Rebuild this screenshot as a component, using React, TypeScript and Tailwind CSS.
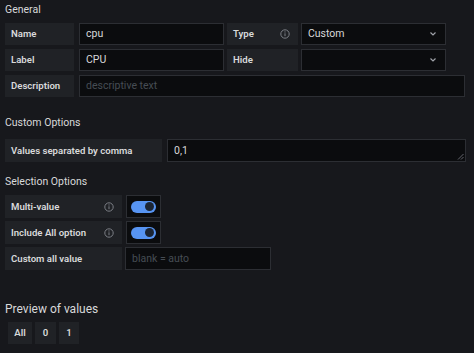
import React from "react";

const Info = () => (
  <svg width="10" height="10" viewBox="0 0 10 10" className="shrink-0">
    <circle cx="5" cy="5" r="4.2" fill="none" stroke="#7b7e85" strokeWidth="1" />
    <line x1="5" y1="4.3" x2="5" y2="7.2" stroke="#7b7e85" strokeWidth="1" />
    <circle cx="5" cy="2.9" r="0.6" fill="#7b7e85" />
  </svg>
);

const Chevron = () => (
  <svg width="8" height="6" viewBox="0 0 8 6" className="shrink-0">
    <path d="M1.5 1.5 L4 4 L6.5 1.5" fill="none" stroke="#9fa2a8" strokeWidth="1.2" />
  </svg>
);

const Label = ({ children, w, info }: { children: React.ReactNode; w: string; info?: boolean }) => (
  <div className={`${w} h-full bg-[#202226] flex items-center justify-between pl-[6px] pr-[8px] text-[9.6px] leading-[12px] font-semibold text-[#d8d9da] shrink-0`}>
    <span>{children}</span>
    {info && <Info />}
  </div>
);

const Input = ({ w, value, placeholder, children }: { w: string; value?: string; placeholder?: string; children?: React.ReactNode }) => (
  <div className={`${w} h-full bg-[#0b0c0e] border border-[#2c2e33] flex items-center pl-[6px] pr-[8px] text-[10.5px] leading-[12px] shrink-0 relative`}>
    {value ? <span className="text-[#d8d9da]">{value}</span> : <span className="text-[#464c54]">{placeholder}</span>}
    {children}
  </div>
);

const Toggle = () => (
  <div className="w-[35px] h-full bg-[#0b0c0e] border border-[#2c2e33] flex items-center justify-center shrink-0">
    <div className="w-[25px] h-[12px] rounded-full bg-[#5794f2] flex items-center justify-end pr-[2px]">
      <div className="w-[9px] h-[9px] rounded-full bg-[#1c2533]" />
    </div>
  </div>
);

export default function App() {
  return (
    <div className="w-[474px] h-[353px] bg-[#17181c] text-[#d8d9da] overflow-hidden pl-[5px]" style={{ fontFamily: "Roboto, 'Liberation Sans', sans-serif" }}>
      <div className="h-[23px] flex items-end pb-[7px] text-[10.5px] leading-[12px]">General</div>
      <div className="flex flex-col gap-[4px]">
        <div className="flex h-[22px]">
          <Label w="w-[69px]">Name</Label>
          <div className="w-[5px]" />
          <Input w="w-[145px]" value="cpu" />
          <div className="w-[3px]" />
          <Label w="w-[71px]" info>Type</Label>
          <div className="w-[3px]" />
          <Input w="w-[145px]" value="Custom">
            <span className="ml-auto"><Chevron /></span>
          </Input>
        </div>
        <div className="flex h-[22px]">
          <Label w="w-[69px]">Label</Label>
          <div className="w-[5px]" />
          <Input w="w-[145px]" value="CPU" />
          <div className="w-[3px]" />
          <Label w="w-[71px]">Hide</Label>
          <div className="w-[3px]" />
          <Input w="w-[145px]" value="">
            <span className="ml-auto"><Chevron /></span>
          </Input>
        </div>
        <div className="flex h-[22px]">
          <Label w="w-[69px]">Description</Label>
          <div className="w-[5px]" />
          <Input w="w-[386px]" placeholder="descriptive text" />
        </div>
      </div>

      <div className="h-[42px] flex items-end pb-[10px] text-[10.5px] leading-[12px]">Custom Options</div>
      <div className="flex h-[23px]">
        <Label w="w-[157px]">Values separated by comma</Label>
        <div className="w-[5px]" />
        <Input w="w-[299px]" value="0,1">
          <svg width="7" height="7" viewBox="0 0 7 7" className="absolute right-[1px] bottom-[1px]">
            <line x1="6.5" y1="1" x2="1" y2="6.5" stroke="#6e7178" strokeWidth="0.9" />
            <line x1="6.5" y1="4" x2="4" y2="6.5" stroke="#6e7178" strokeWidth="0.9" />
          </svg>
        </Input>
      </div>

      <div className="h-[33px] flex items-end pb-[7px] text-[10.5px] leading-[12px]">Selection Options</div>
      <div className="flex flex-col gap-[3px]">
        <div className="flex h-[23px]">
          <Label w="w-[117px]" info>Multi-value</Label>
          <div className="w-[4px]" />
          <Toggle />
        </div>
        <div className="flex h-[23px]">
          <Label w="w-[117px]" info>Include All option</Label>
          <div className="w-[4px]" />
          <Toggle />
        </div>
        <div className="flex h-[23px]">
          <Label w="w-[117px]">Custom all value</Label>
          <div className="w-[3px]" />
          <Input w="w-[146px]" placeholder="blank = auto" />
        </div>
      </div>

      <div className="h-[52px] flex items-end pb-[6px] text-[12px] leading-[14px]">Preview of values</div>
      <div className="flex gap-[3px] pl-[3px]">
        <div className="h-[22px] w-[24px] bg-[#202226] flex items-center justify-center text-[9.6px] font-semibold">All</div>
        <div className="h-[22px] w-[21px] bg-[#202226] flex items-center justify-center text-[9.6px] font-semibold">0</div>
        <div className="h-[22px] w-[20px] bg-[#202226] flex items-center justify-center text-[9.6px] font-semibold">1</div>
      </div>
    </div>
  );
}
